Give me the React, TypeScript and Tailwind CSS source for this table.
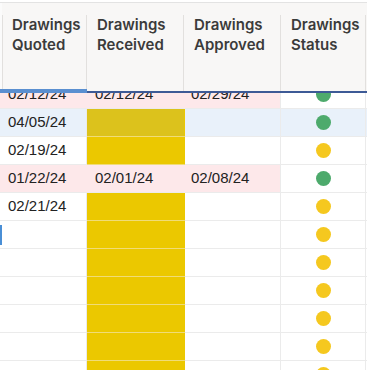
import React from "react";

type Row = {
  bg: string;
  bg3: string;
  bg2: string;
  t1?: string;
  t2?: string;
  t3?: string;
  dot: "g" | "y";
  ind?: boolean;
  yellow: boolean;
};

const PINK = "bg-[#fde8ea]";
const BLUE = "bg-[#e9f1fa]";
const WHITE = "bg-white";

const rows: Row[] = [
  { bg: WHITE, bg2: PINK, bg3: PINK, t1: "02/12/24", t2: "02/12/24", t3: "02/29/24", dot: "g", yellow: false },
  { bg: BLUE, bg2: "bg-[#dcc21c]", bg3: BLUE, t1: "04/05/24", dot: "g", yellow: true },
  { bg: WHITE, bg2: "bg-[#ebc800]", bg3: WHITE, t1: "02/19/24", dot: "y", yellow: true },
  { bg: WHITE, bg2: PINK, bg3: PINK, t1: "01/22/24", t2: "02/01/24", t3: "02/08/24", dot: "g", yellow: false },
  { bg: WHITE, bg2: "bg-[#ebc800]", bg3: WHITE, t1: "02/21/24", dot: "y", yellow: true },
  { bg: WHITE, bg2: "bg-[#ebc800]", bg3: WHITE, dot: "y", yellow: true, ind: true },
  { bg: WHITE, bg2: "bg-[#ebc800]", bg3: WHITE, dot: "y", yellow: true },
  { bg: WHITE, bg2: "bg-[#ebc800]", bg3: WHITE, dot: "y", yellow: true },
  { bg: WHITE, bg2: "bg-[#ebc800]", bg3: WHITE, dot: "y", yellow: true },
  { bg: WHITE, bg2: "bg-[#ebc800]", bg3: WHITE, dot: "y", yellow: true },
  { bg: WHITE, bg2: "bg-[#ebc800]", bg3: WHITE, dot: "y", yellow: true },
];

function HeaderCell({ w, pl, l1, l2 }: { w: string; pl: string; l1: string; l2: string }) {
  return (
    <div className={`flex ${w} shrink-0 border-b-2 border-[#3d5a96]`}>
      <div className={`flex-1 pt-3 ${pl} text-[15px] leading-5 font-semibold text-[#3b3b3b]`}>
        <div>{l1}</div>
        <div>{l2}</div>
      </div>
      <div className="w-px mt-3 bg-[#e2e0de]" />
    </div>
  );
}

export default function App() {
  return (
    <div
      className="w-[367px] h-[370px] overflow-hidden bg-white flex flex-col"
      style={{ fontFamily: "'Liberation Sans', Arial, sans-serif" }}
    >
      <div className="h-[2px] bg-white shrink-0" />
      <div className="h-px bg-[#e3e3e3] shrink-0" />
      {/* header */}
      <div className="flex h-[90px] shrink-0 bg-[#f8f7f6] relative z-10" style={{ fontFamily: "Inter, 'Noto Sans', sans-serif" }}>
        <div className="flex w-[87px] shrink-0 border-b-4 border-[#5a8fd0]">
          <div className="w-[2px] bg-[#fbfbfb]" />
          <div className="w-px mt-3 bg-[#e2e0de]" />
          <div className="flex-1 pt-3 pl-[9px] text-[15px] leading-5 font-semibold text-[#3b3b3b]">
            <div>Drawings</div>
            <div>Quoted</div>
          </div>
          <div className="w-px mt-3 bg-[#e2e0de]" />
        </div>
        <HeaderCell w="w-[97px]" pl="pl-[10px]" l1="Drawings" l2="Received" />
        <HeaderCell w="w-[97px]" pl="pl-[10px]" l1="Drawings" l2="Approved" />
        <HeaderCell w="w-[85px]" pl="pl-[10px]" l1="Drawings" l2="Status" />
        <div className="flex-1 border-b-2 border-[#3d5a96]" />
      </div>
      {/* body */}
      <div className="flex-1 overflow-hidden text-[15px] text-[#222]">
        <div className="-mt-[12px]">
          {rows.map((r, i) => {
            const pink = r.bg2 === PINK;
            return (
              <div key={i} className={`flex h-[28px] ${r.bg}`}>
                <div
                  className={`relative w-[87px] shrink-0 flex items-center pl-2 border-b border-[#ebebeb] border-r ${
                    pink ? `${PINK} border-r-[#fde8ea]` : "border-r-[#ebebeb]"
                  }`}
                >
                  {r.ind && <div className="absolute left-0 top-[4px] bottom-[3px] w-[2px] bg-[#4a8fd6]" />}
                  {r.t1}
                </div>
                <div className={`w-[97px] shrink-0 flex items-center pl-2 border-b ${r.yellow ? "border-[#f0dc78]" : "border-[#ebebeb]"} ${r.bg2}`}>
                  {r.t2}
                </div>
                <div
                  className={`w-[97px] shrink-0 flex items-center pl-[6px] border-b border-r border-[#ebebeb] border-l ${r.bg3} ${
                    r.yellow ? "border-l-[#ebc800]" : pink ? "border-l-[#fde8ea]" : "border-l-[#ebebeb]"
                  }`}
                >
                  {r.t3}
                </div>
                <div className="w-[85px] shrink-0 flex items-center justify-center border-b border-r border-[#ebebeb]">
                  <div className={`w-[15px] h-[15px] rounded-full ${r.dot === "g" ? "bg-[#4daa6c]" : "bg-[#f5c81f]"}`} />
                </div>
                <div className="flex-1 border-b border-[#ebebeb]" />
              </div>
            );
          })}
        </div>
      </div>
    </div>
  );
}
